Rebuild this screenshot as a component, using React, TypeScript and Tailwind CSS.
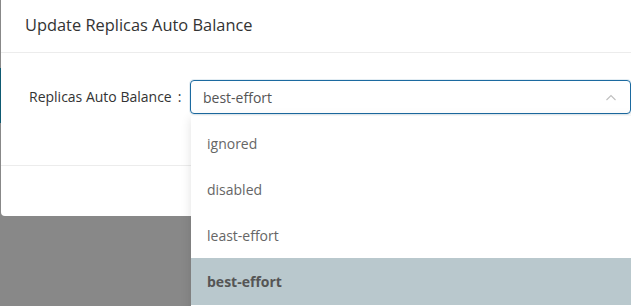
import React from "react";

const items = ["ignored", "disabled", "least-effort", "best-effort"];

export default function App() {
  return (
    <div
      className="relative w-[631px] h-[306px] overflow-hidden bg-[#888888]"
      style={{ fontFamily: '"Open Sans", "Noto Sans", sans-serif' }}
    >
      <div className="absolute left-0 top-[68px] w-[1px] h-[55px] bg-[#0e5a72]" />
      <div className="absolute left-[1px] top-0 w-[700px] h-[216px] bg-white rounded-bl-[4px] flex flex-col">
        <div className="h-[53px] shrink-0 border-b border-[#ececec] px-[24px] flex items-center text-[16.4px] text-[#333] pb-[2px]">
          Update Replicas Auto Balance
        </div>
        <div className="h-[113px] shrink-0 border-b border-[#ececec] pt-[27px] flex items-start">
          <div className="w-[189px] h-[33px] flex items-center pl-[28px] text-[14px] text-[#333]">
            <span>Replicas Auto Balance</span>
            <span className="ml-[6px]">:</span>
          </div>
          <div className="w-[441px] h-[34px] border border-[#1c6aa0] rounded-[4px] flex items-center justify-between pl-[12px] pr-[13px] text-[14px] text-[#555] shadow-[0_0_0_1px_rgba(28,106,160,0.12)]">
            <span>best-effort</span>
            <svg width="12" height="12" viewBox="0 0 12 12" className="mt-[2px]">
              <path d="M1.5 8 L6 3.5 L10.5 8" fill="none" stroke="#bfbfbf" strokeWidth="1.1" />
            </svg>
          </div>
        </div>
      </div>
      <div className="absolute left-[191px] top-[116px] w-[460px] h-[200px] bg-white pt-[4px] shadow-[0_2px_10px_rgba(0,0,0,0.12)]">
        {items.map((it) => {
          const sel = it === "best-effort";
          return (
            <div
              key={it}
              className={
                sel
                  ? "h-[47px] flex items-center pl-[16px] text-[14px] font-bold text-[#555] bg-[#b9c8cd]"
                  : "h-[46px] flex items-center pl-[16px] text-[14px] text-[#666]"
              }
            >
              {it}
            </div>
          );
        })}
      </div>
    </div>
  );
}
